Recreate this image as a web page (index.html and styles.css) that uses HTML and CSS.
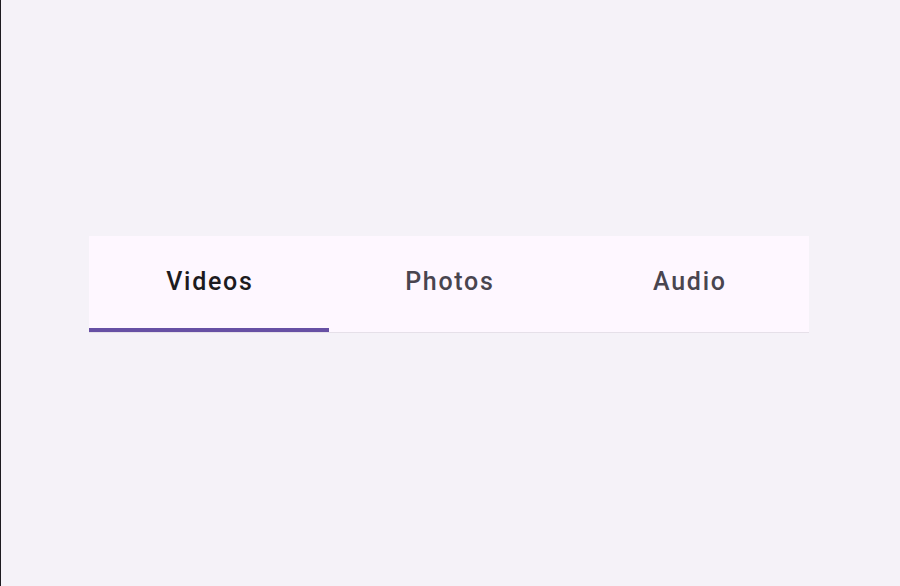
FILE: index.html
```html
<!DOCTYPE html>
<html>
<head>
<meta charset="utf-8">
<link rel="stylesheet" href="styles.css">
</head>
<body>
<div class="edge"></div>
<main class="stage">
  <nav class="tabs">
    <div class="tab active"><span class="label">Videos</span><span class="indicator"></span></div>
    <div class="tab"><span class="label">Photos</span></div>
    <div class="tab"><span class="label">Audio</span></div>
  </nav>
</main>
</body>
</html>
```
FILE: styles.css
```css
html, body {
  margin: 0;
  padding: 0;
  height: 100%;
}
body {
  background: #f5f2f8;
  font-family: Roboto, "Noto Sans", sans-serif;
}
.edge {
  position: fixed;
  left: 0;
  top: 0;
  width: 1px;
  height: 100%;
  background: #1d1b20;
}
.stage {
  padding: 236px 0 0 89px;
}
.tabs {
  display: flex;
  width: 720px;
  background: #fef7ff;
  border-bottom: 1px solid #e6e0e9;
}
.tab {
  position: relative;
  flex: 1;
  height: 96px;
  display: flex;
  align-items: center;
  justify-content: center;
  padding-bottom: 6px;
  box-sizing: border-box;
  color: #49454f;
}
.tab.active {
  color: #1d1b20;
}
.label {
  font-size: 25px;
  font-weight: 500;
  letter-spacing: 1.7px;
  margin-right: -1.7px;
}
.indicator {
  position: absolute;
  left: 0;
  right: 0;
  bottom: 0;
  height: 4px;
  background: #6750a4;
}
```
